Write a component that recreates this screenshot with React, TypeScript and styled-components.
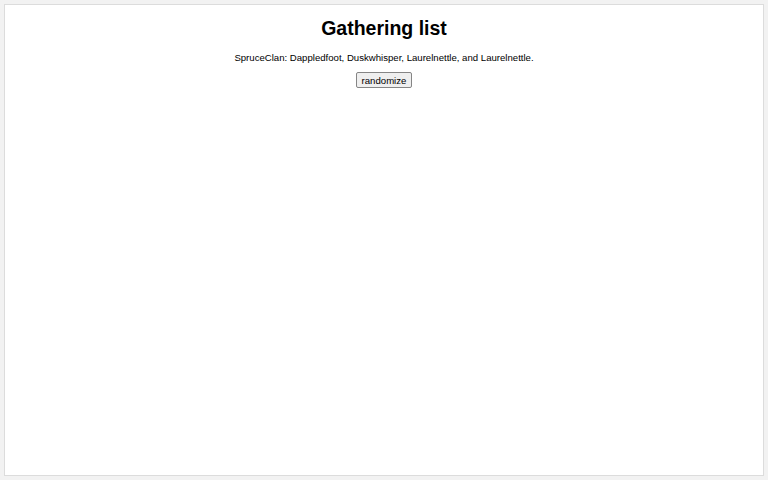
import React, { useState } from 'react';
import styled, { createGlobalStyle } from 'styled-components';

const GlobalStyle = createGlobalStyle`
  html, body {
    margin: 0;
    padding: 0;
    background: #f2f2f2;
    font-family: "Liberation Sans", Arial, sans-serif;
  }
`;

const Page = styled.div`
  padding: 4px;
  height: 480px;
  box-sizing: border-box;
`;

const Panel = styled.main`
  height: 100%;
  box-sizing: border-box;
  background: #fff;
  border: 1px solid #dcdcdc;
  display: flex;
  flex-direction: column;
  align-items: center;
  padding-top: 12px;
`;

const Title = styled.h1`
  margin: 0;
  font-size: 19.5px;
  font-weight: bold;
  color: #000;
`;

const Summary = styled.p`
  margin: 12px 0 0;
  font-size: 9.6px;
  color: #000;
`;

const Button = styled.button`
  margin-top: 9px;
  font-family: inherit;
  font-size: 9.6px;
  padding: 1.5px 4.5px;
  color: #000;
  background: #efefef;
  border: 1px solid #858585;
  border-radius: 2px;
`;

const members = ['Dappledfoot', 'Duskwhisper', 'Laurelnettle', 'Laurelnettle'];

const App: React.FC = () => {
  const [list, setList] = useState(members);

  const shuffle = () => {
    setList([...list].sort(() => Math.random() - 0.5));
  };

  return (
    <>
      <GlobalStyle />
      <Page>
        <Panel>
          <Title>Gathering list</Title>
          <Summary>
            SpruceClan: {list.slice(0, -1).join(', ')}, and {list[list.length - 1]}.
          </Summary>
          <Button onClick={shuffle}>randomize</Button>
        </Panel>
      </Page>
    </>
  );
};

export default App;
